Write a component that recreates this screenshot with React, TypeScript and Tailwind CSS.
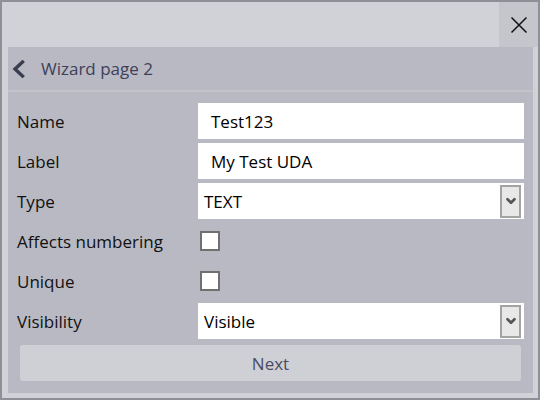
import { ChevronDown } from "lucide-react"

const font = { fontFamily: '"Open Sans", "Noto Sans", sans-serif' }

function TextRow({ label, value }: { label: string; value: string }) {
  return (
    <div className="flex h-[36px] items-center">
      <span className="w-[181px] pt-[1px] text-[17px] text-[#111]">{label}</span>
      <div className="flex h-full flex-1 items-center bg-white pl-[13px] pt-[1px] text-[17px] text-black">
        {value}
      </div>
    </div>
  )
}

function ComboRow({ label, value }: { label: string; value: string }) {
  return (
    <div className="flex h-[36px] items-center">
      <span className="w-[181px] pt-[1px] text-[17px] text-[#111]">{label}</span>
      <div className="flex h-full flex-1 items-center justify-between bg-white pl-[6px] pr-[3px] text-[17px] text-black">
        <span className="pt-[1px]">{value}</span>
        <div className="flex h-[33px] w-[21px] items-center justify-center border-2 border-[#a3a3a3] bg-[#e8e8e8]">
          <ChevronDown size={14} strokeWidth={4.5} className="text-[#555]" />
        </div>
      </div>
    </div>
  )
}

function CheckRow({ label }: { label: string }) {
  return (
    <div className="flex h-[36px] items-center">
      <span className="w-[183px] pt-[1px] text-[17px] text-[#111]">{label}</span>
      <div className="h-[20px] w-[20px] border-2 border-[#707070] bg-white" />
    </div>
  )
}

export default function App() {
  return (
    <div className="h-[400px] w-[540px] bg-[#8f8f97] p-[2px]" style={font}>
      <div className="flex h-full flex-col bg-[#d1d2d7]">
        <div className="flex h-[45px] justify-end">
          <button className="flex w-[39px] items-center justify-center bg-[#c5c6cc]">
            <svg width="18" height="18" viewBox="0 0 18 18" fill="none" stroke="#111" strokeWidth="1.5">
              <path d="M1.5 1.5 L16.5 16.5 M16.5 1.5 L1.5 16.5" />
            </svg>
          </button>
        </div>
        <div className="flex flex-1 flex-col pb-[5px] pl-[6px] pr-[5px]">
          <div className="flex flex-1 flex-col bg-[#b9b9c3]">
            <div className="flex h-[43px] items-center gap-[15px] pl-[3px]">
              <svg width="15" height="18" viewBox="0 0 15 18" fill="none" stroke="#3a3c50" strokeWidth="3.4" strokeLinecap="square">
                <path d="M11.5 2 L4 9 L11.5 16" />
              </svg>
              <span className="pt-[1px] text-[17px] text-[#3d405a]">Wizard page 2</span>
            </div>
            <div className="h-[2px] bg-[#c3c3cb]" />
            <div className="flex flex-col gap-[4px] px-[9px] pt-[11px]">
              <TextRow label="Name" value="Test123" />
              <TextRow label="Label" value="My Test UDA" />
              <ComboRow label="Type" value="TEXT" />
              <CheckRow label="Affects numbering" />
              <CheckRow label="Unique" />
              <ComboRow label="Visibility" value="Visible" />
            </div>
            <div className="px-[12px] pt-[6px]">
              <button className="h-[36px] w-full rounded-[3px] bg-[#cfd0d5] pt-[1px] text-[17px] text-[#4a4c63]">
                Next
              </button>
            </div>
          </div>
        </div>
      </div>
    </div>
  )
}
